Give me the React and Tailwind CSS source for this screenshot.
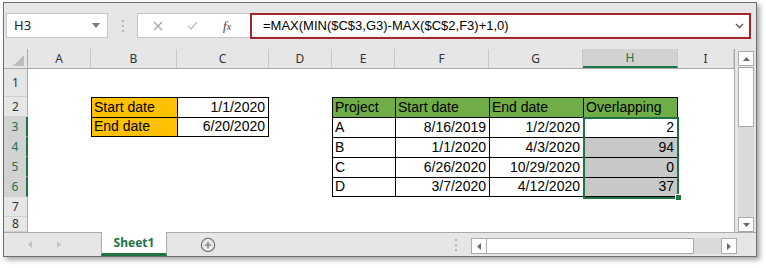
import { CirclePlus } from "lucide-react";

const cols = [
  { id: "A", w: "w-[63px]" },
  { id: "B", w: "w-[86px]" },
  { id: "C", w: "w-[92px]" },
  { id: "D", w: "w-[63px]" },
  { id: "E", w: "w-[63px]" },
  { id: "F", w: "w-[94px]" },
  { id: "G", w: "w-[94px]" },
  { id: "H", w: "w-[95px]" },
  { id: "I", w: "w-[56px]" },
];

const rows = [
  { n: 1, h: "h-[28px]" },
  { n: 2, h: "h-5" },
  { n: 3, h: "h-5" },
  { n: 4, h: "h-5" },
  { n: 5, h: "h-5" },
  { n: 6, h: "h-5" },
  { n: 7, h: "h-5" },
  { n: 8, h: "h-[15px]" },
];

const projects = [
  ["Project", "Start date", "End date", "Overlapping"],
  ["A", "8/16/2019", "1/2/2020", "2"],
  ["B", "1/1/2020", "4/3/2020", "94"],
  ["C", "6/26/2020", "10/29/2020", "0"],
  ["D", "3/7/2020", "4/12/2020", "37"],
];

// build the cell map once: key is row + column letter
const cells = {
  "2B": { t: "Start date", cls: "bg-[#ffc000] border-l border-t border-black" },
  "2C": { t: "1/1/2020", right: true, cls: "border-l border-t border-r border-black" },
  "3B": { t: "End date", cls: "bg-[#ffc000] border-l border-t border-b border-black" },
  "3C": { t: "6/20/2020", right: true, cls: "border border-black" },
};

projects.forEach((vals, i) => {
  const r = i + 2;
  ["E", "F", "G", "H"].forEach((c, j) => {
    let cls = "border-l border-t border-black";
    if (c === "H") cls += " border-r";
    if (r === 6) cls += " border-b";
    if (r === 2) cls += " bg-[#70ad47]";
    if (c === "H" && r > 3) cls += " bg-[#c8c8c8]";
    cells[r + c] = { t: vals[j], right: r !== 2 && c !== "E", cls };
  });
});

const selectedRows = [3, 4, 5, 6];

const Cell = ({ w, data }) => {
  if (!data) return <div className={`${w} shrink-0`} />;
  return (
    <div
      className={`${w} ${data.cls} shrink-0 h-full flex items-end pb-[1px] px-[2px] leading-[18px] text-[14px] text-black overflow-hidden whitespace-nowrap ${
        data.right ? "justify-end pr-[3px]" : "justify-start"
      }`}
    >
      {data.t}
    </div>
  );
};

const Dots = () => (
  <div className="flex flex-col gap-[3px]">
    <div className="w-[2px] h-[2px] bg-[#b4b4b4]" />
    <div className="w-[2px] h-[2px] bg-[#b4b4b4]" />
    <div className="w-[2px] h-[2px] bg-[#b4b4b4]" />
  </div>
);

export default function App() {
  return (
    <div className="w-[766px] h-[268px] bg-white overflow-hidden pt-[2px] pl-[3px]">
      <div
        className="w-[754px] h-[255px] border border-[#6e6e6e] bg-[#e6e6e6] flex flex-col shadow-[3px_3px_5px_rgba(0,0,0,0.35)]"
        style={{ fontFamily: '"Noto Sans", "Open Sans", sans-serif' }}
      >
        {/* formula bar */}
        <div className="flex items-center pt-[10px] h-[35px] shrink-0">
          <div className="ml-[2px] w-[102px] h-[25px] border border-[#c6c6c6] bg-white flex items-center justify-between pl-[7px] pr-[7px]">
            <span className="text-[13px] text-[#222] leading-none">H3</span>
            <svg width="8" height="5" viewBox="0 0 8 5">
              <path d="M0 0 H8 L4 5 Z" fill="#7a7a7a" />
            </svg>
          </div>
          <div className="ml-[13px] w-[3px] flex justify-center">
            <Dots />
          </div>
          <div className="ml-[13px] w-[113px] h-[25px] border border-r-0 border-[#c6c6c6] bg-white flex items-center">
            <svg className="ml-[15px]" width="10" height="10" viewBox="0 0 10 10">
              <path d="M1 1 L9 9 M9 1 L1 9" stroke="#a6a6a6" strokeWidth="1.3" />
            </svg>
            <svg className="ml-[24px]" width="11" height="9" viewBox="0 0 11 9">
              <path d="M1 5 L4 8 L10 1" stroke="#c4c4c4" strokeWidth="1.4" fill="none" />
            </svg>
            <span
              className="ml-[25px] italic text-[13px] text-[#444] leading-none"
              style={{ fontFamily: '"Liberation Serif", serif' }}
            >
              f<span className="text-[10px]">x</span>
            </span>
          </div>
          <div className="w-[501px] h-[26px] border-2 border-[#a4262c] bg-white flex items-center justify-between pl-[11px] pr-[5px] shadow-[inset_0_-2px_3px_rgba(0,0,0,0.06)]">
            <span
              className="text-[13px] text-black leading-none"
              style={{ fontFamily: '"Liberation Sans", Arial, sans-serif' }}
            >
              =MAX(MIN($C$3,G3)-MAX($C$2,F3)+1,0)
            </span>
            <svg width="9" height="6" viewBox="0 0 9 6">
              <path d="M1 1 L4.5 4.5 L8 1" stroke="#6a6a6a" strokeWidth="1.6" fill="none" />
            </svg>
          </div>
        </div>

        {/* sheet area */}
        <div className="mt-[11px] flex h-[183px] shrink-0">
          <div className="relative w-[731px] border-r border-[#ababab] flex flex-col">
            {/* column headers */}
            <div className="flex h-5 shrink-0 border-b border-[#ababab] text-[12px] text-[#333]">
              <div className="w-[24px] shrink-0 border-r border-[#ababab] flex items-end justify-end pr-[3px] pb-[2px]">
                <svg width="11" height="11" viewBox="0 0 11 11">
                  <path d="M11 0 V11 H0 Z" fill="#bdbdbd" />
                </svg>
              </div>
              {cols.map((c) => (
                <div
                  key={c.id}
                  className={`${c.w} shrink-0 flex items-center justify-center border-r border-[#c8c8c8] ${
                    c.id === "H" ? "bg-[#d2d2d2] border-b-2 border-b-[#217346] text-[#217346]" : ""
                  }`}
                >
                  {c.id}
                </div>
              ))}
            </div>

            {/* rows */}
            {rows.map((r) => {
              const sel = selectedRows.includes(r.n);
              return (
                <div key={r.n} className={`flex ${r.h} shrink-0`}>
                  <div
                    className={`w-[24px] shrink-0 flex items-center justify-center text-[12px] border-b border-[#d0d0d0] ${
                      sel
                        ? "bg-[#d2d2d2] text-[#217346] border-r-2 border-r-[#217346]"
                        : "text-[#333] border-r border-r-[#ababab]"
                    }`}
                  >
                    {r.n}
                  </div>
                  <div className="flex flex-1 bg-white" style={{ fontFamily: '"Liberation Sans", Arial, sans-serif' }}>
                    {cols.map((c) => (
                      <Cell key={c.id} w={c.w} data={cells[r.n + c.id]} />
                    ))}
                  </div>
                </div>
              );
            })}
            <div className="flex-1 bg-white" />

            {/* selection H3:H6 */}
            <div className="absolute left-[579px] top-[68px] w-[96px] h-[82px] border-2 border-[#217346]" />
            <div className="absolute left-[671px] top-[145px] w-[7px] h-[7px] bg-[#217346] border border-white" />
          </div>

          {/* vertical scrollbar */}
          <div className="ml-[3px] mt-[2px] w-[16px] flex flex-col">
            <div className="h-[15px] border border-[#ababab] bg-white flex items-center justify-center">
              <svg width="7" height="4" viewBox="0 0 7 4">
                <path d="M0 4 L3.5 0 L7 4 Z" fill="#6a6a6a" />
              </svg>
            </div>
            <div className="mt-px h-[60px] border border-[#ababab] bg-white" />
            <div className="flex-1 bg-[#dadada]" />
            <div className="h-[15px] border border-[#ababab] bg-white flex items-center justify-center">
              <svg width="7" height="4" viewBox="0 0 7 4">
                <path d="M0 0 L7 0 L3.5 4 Z" fill="#6a6a6a" />
              </svg>
            </div>
          </div>
        </div>

        {/* sheet tabs and horizontal scrollbar */}
        <div className="h-[24px] border-t border-[#ababab] flex items-start shrink-0">
          <div className="w-[97px] h-full flex items-center">
            <svg className="ml-[24px]" width="4" height="7" viewBox="0 0 4 7">
              <path d="M4 0 V7 L0 3.5 Z" fill="#c2c2c2" />
            </svg>
            <svg className="ml-[25px]" width="4" height="7" viewBox="0 0 4 7">
              <path d="M0 0 V7 L4 3.5 Z" fill="#c2c2c2" />
            </svg>
          </div>
          <div className="-mt-px w-[66px] h-[24px] bg-white border-x border-[#ababab] border-b-[3px] border-b-[#217346] flex items-center justify-center">
            <span className="text-[12px] font-bold text-[#217346] leading-none">Sheet1</span>
          </div>
          <div className="ml-[33px] h-full flex items-center">
            <CirclePlus size={16} strokeWidth={1.6} color="#6a6a6a" />
          </div>
          <div className="ml-[239px] h-full flex items-center">
            <Dots />
          </div>
          <div className="ml-[14px] mt-[5px] flex h-[16px]">
            <div className="w-[16px] border border-[#ababab] bg-white flex items-center justify-center">
              <svg width="4" height="7" viewBox="0 0 4 7">
                <path d="M4 0 V7 L0 3.5 Z" fill="#6a6a6a" />
              </svg>
            </div>
            <div className="w-[207px] border border-l-0 border-[#ababab] bg-white" />
            <div className="w-[27px] bg-[#dadada]" />
            <div className="w-[16px] border border-[#ababab] bg-white flex items-center justify-center">
              <svg width="4" height="7" viewBox="0 0 4 7">
                <path d="M0 0 V7 L4 3.5 Z" fill="#6a6a6a" />
              </svg>
            </div>
          </div>
        </div>
      </div>
    </div>
  );
}
